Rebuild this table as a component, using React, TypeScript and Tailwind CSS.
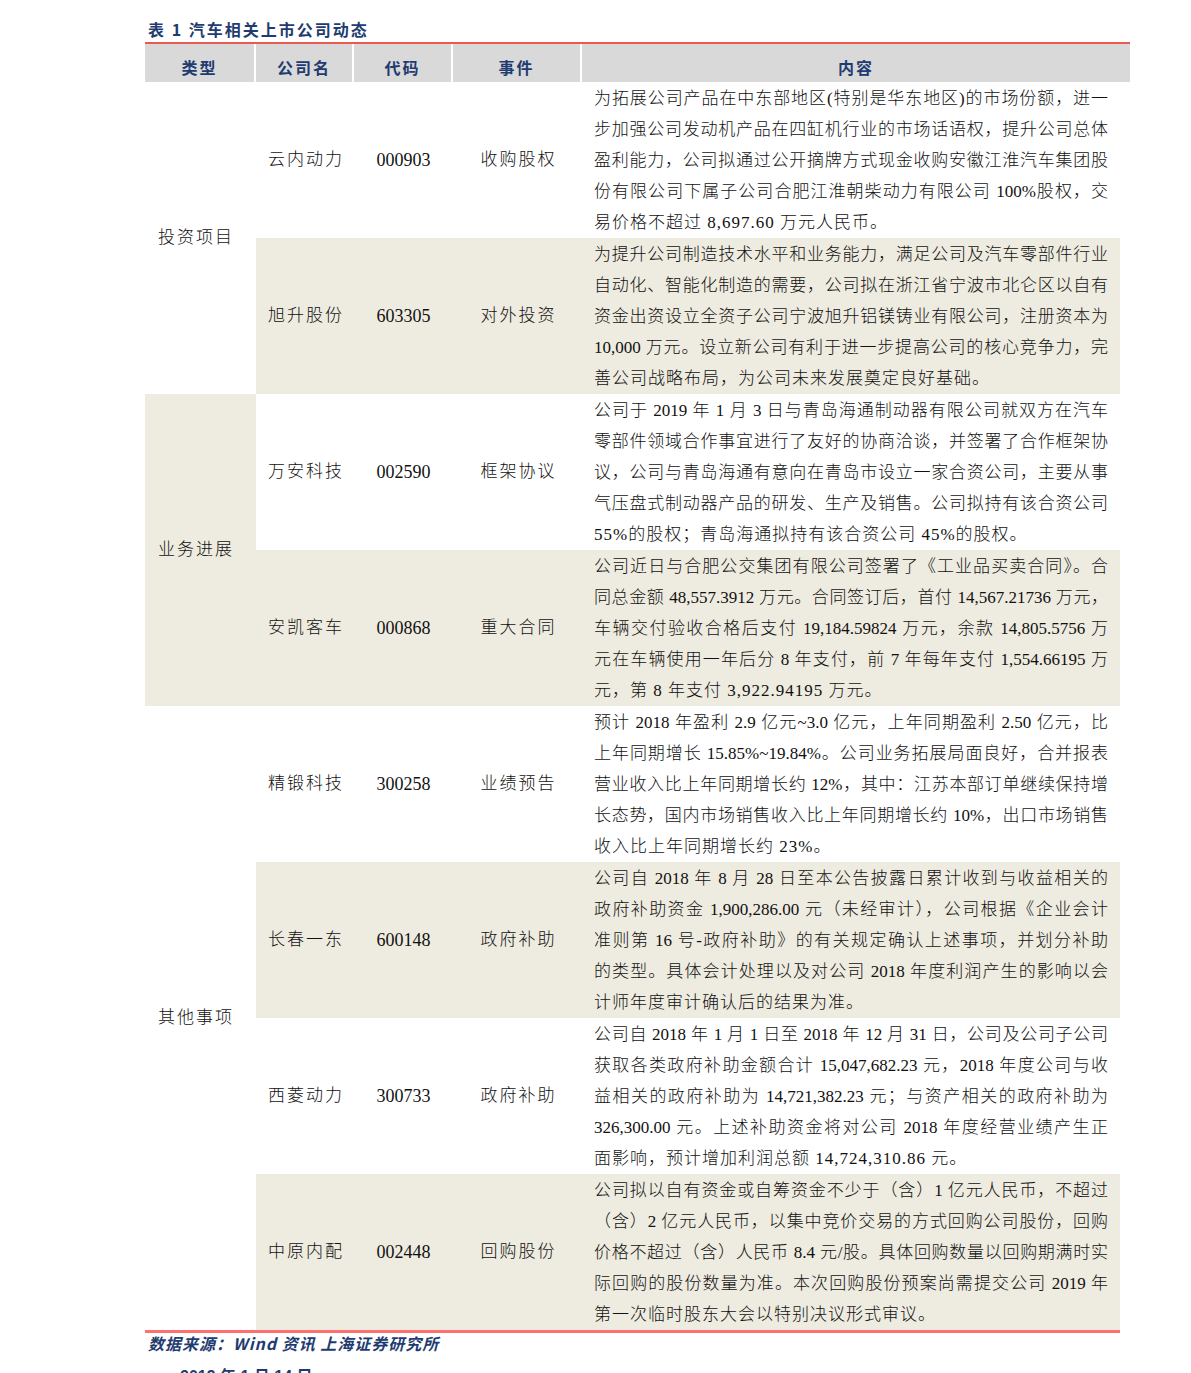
import React from 'react'

interface Row {
  name: string
  code: string
  event: string
  lines: string[]
  shaded: boolean
}

interface Group {
  label: string
  shaded: boolean
  rows: Row[]
}

const GROUPS: Group[] = [
  {
    label: '投资项目',
    shaded: false,
    rows: [
      {
        name: '云内动力',
        code: '000903',
        event: '收购股权',
        shaded: false,
        lines: [
          '为拓展公司产品在中东部地区(特别是华东地区)的市场份额，进一',
          '步加强公司发动机产品在四缸机行业的市场话语权，提升公司总体',
          '盈利能力，公司拟通过公开摘牌方式现金收购安徽江淮汽车集团股',
          '份有限公司下属子公司合肥江淮朝柴动力有限公司 100%股权，交',
          '易价格不超过 8,697.60 万元人民币。',
        ],
      },
      {
        name: '旭升股份',
        code: '603305',
        event: '对外投资',
        shaded: true,
        lines: [
          '为提升公司制造技术水平和业务能力，满足公司及汽车零部件行业',
          '自动化、智能化制造的需要，公司拟在浙江省宁波市北仑区以自有',
          '资金出资设立全资子公司宁波旭升铝镁铸业有限公司，注册资本为',
          '10,000 万元。设立新公司有利于进一步提高公司的核心竞争力，完',
          '善公司战略布局，为公司未来发展奠定良好基础。',
        ],
      },
    ],
  },
  {
    label: '业务进展',
    shaded: true,
    rows: [
      {
        name: '万安科技',
        code: '002590',
        event: '框架协议',
        shaded: false,
        lines: [
          '公司于 2019 年 1 月 3 日与青岛海通制动器有限公司就双方在汽车',
          '零部件领域合作事宜进行了友好的协商洽谈，并签署了合作框架协',
          '议，公司与青岛海通有意向在青岛市设立一家合资公司，主要从事',
          '气压盘式制动器产品的研发、生产及销售。公司拟持有该合资公司',
          '55%的股权；青岛海通拟持有该合资公司 45%的股权。',
        ],
      },
      {
        name: '安凯客车',
        code: '000868',
        event: '重大合同',
        shaded: true,
        lines: [
          '公司近日与合肥公交集团有限公司签署了《工业品买卖合同》。合',
          '同总金额 48,557.3912 万元。合同签订后，首付 14,567.21736 万元，',
          '车辆交付验收合格后支付 19,184.59824 万元，余款 14,805.5756 万',
          '元在车辆使用一年后分 8 年支付，前 7 年每年支付 1,554.66195 万',
          '元，第 8 年支付 3,922.94195 万元。',
        ],
      },
    ],
  },
  {
    label: '其他事项',
    shaded: false,
    rows: [
      {
        name: '精锻科技',
        code: '300258',
        event: '业绩预告',
        shaded: false,
        lines: [
          '预计 2018 年盈利 2.9 亿元~3.0 亿元，上年同期盈利 2.50 亿元，比',
          '上年同期增长 15.85%~19.84%。公司业务拓展局面良好，合并报表',
          '营业收入比上年同期增长约 12%，其中：江苏本部订单继续保持增',
          '长态势，国内市场销售收入比上年同期增长约 10%，出口市场销售',
          '收入比上年同期增长约 23%。',
        ],
      },
      {
        name: '长春一东',
        code: '600148',
        event: '政府补助',
        shaded: true,
        lines: [
          '公司自 2018 年 8 月 28 日至本公告披露日累计收到与收益相关的',
          '政府补助资金 1,900,286.00 元（未经审计），公司根据《企业会计',
          '准则第 16 号-政府补助》的有关规定确认上述事项，并划分补助',
          '的类型。具体会计处理以及对公司 2018 年度利润产生的影响以会',
          '计师年度审计确认后的结果为准。',
        ],
      },
      {
        name: '西菱动力',
        code: '300733',
        event: '政府补助',
        shaded: false,
        lines: [
          '公司自 2018 年 1 月 1 日至 2018 年 12 月 31 日，公司及公司子公司',
          '获取各类政府补助金额合计 15,047,682.23 元，2018 年度公司与收',
          '益相关的政府补助为 14,721,382.23 元；与资产相关的政府补助为',
          '326,300.00 元。上述补助资金将对公司 2018 年度经营业绩产生正',
          '面影响，预计增加利润总额 14,724,310.86 元。',
        ],
      },
      {
        name: '中原内配',
        code: '002448',
        event: '回购股份',
        shaded: true,
        lines: [
          '公司拟以自有资金或自筹资金不少于（含）1 亿元人民币，不超过',
          '（含）2 亿元人民币，以集中竞价交易的方式回购公司股份，回购',
          '价格不超过（含）人民币 8.4 元/股。具体回购数量以回购期满时实',
          '际回购的股份数量为准。本次回购股份预案尚需提交公司 2019 年',
          '第一次临时股东大会以特别决议形式审议。',
        ],
      },
    ],
  },
]

const bodyFont = "[font-family:'Liberation_Serif','Noto_Sans_CJK_SC',serif]"

const TableRow: React.FC<{ row: Row }> = ({ row }) => (
  <div className={`flex h-[156px] ${row.shaded ? 'bg-[#eeebe0]' : 'bg-white'}`}>
    <div className="w-[98px] flex items-center justify-center tracking-[2px] pl-[2px]">{row.name}</div>
    <div className="w-[99px] flex items-center justify-center text-[18px]">{row.code}</div>
    <div className="w-[129px] flex items-center justify-center tracking-[2px] pl-[2px]">{row.event}</div>
    <div className="w-[538px] flex flex-col justify-center pl-[12px] pr-[12px]">
      {row.lines.map((line, i) => (
        <div
          key={i}
          className={`leading-[31px] whitespace-nowrap ${
            i < row.lines.length - 1 ? 'text-justify [text-align-last:justify]' : 'tracking-[1px]'
          }`}
        >
          {line}
        </div>
      ))}
    </div>
  </div>
)

const App: React.FC = () => {
  return (
    <div className="min-h-[1373px] bg-white pl-[145px] pt-[17px] pb-10">
      <div className="w-[985px]">
        <div className="pl-[3px] leading-[24px] text-[16px] font-bold tracking-[2px] text-[#1f3c70] [font-family:'Noto_Sans_CJK_SC',sans-serif]">
          表 1 汽车相关上市公司动态
        </div>
        <div className="mt-[1px] h-[2px] bg-[#e85a52]" />
        <div className="flex h-[38px] bg-[#d9d9d9] text-[16px] font-bold tracking-[2px] text-[#1f3c70] [font-family:'Noto_Sans_CJK_SC',sans-serif]">
          <div className="w-[111px] border-r-2 border-white flex items-end justify-center pb-[3px]">类型</div>
          <div className="w-[98px] border-r-2 border-white flex items-end justify-center pb-[3px]">公司名</div>
          <div className="w-[99px] border-r-2 border-white flex items-end justify-center pb-[3px]">代码</div>
          <div className="w-[129px] border-r-2 border-white flex items-end justify-center pb-[3px]">事件</div>
          <div className="flex-1 flex items-end justify-center pb-[3px]">内容</div>
        </div>
      </div>

      <div className={`w-[975px] text-[17px] font-light text-[#111] ${bodyFont}`}>
        {GROUPS.map(group => (
          <div key={group.label} className="flex">
            <div
              className={`w-[111px] flex items-center pl-[13px] tracking-[2px] ${
                group.shaded ? 'bg-[#eeebe0]' : 'bg-white'
              }`}
            >
              {group.label}
            </div>
            <div className="flex flex-col">
              {group.rows.map(row => (
                <TableRow key={row.code} row={row} />
              ))}
            </div>
          </div>
        ))}
        <div className="h-[3px] bg-[#ff6f6f]" />
      </div>

      <div className="pl-[3px] leading-[20px] text-[16px] font-bold italic tracking-[1px] text-[#1f3c70] [font-family:'Noto_Sans_CJK_SC',sans-serif]">
        数据来源：Wind 资讯 上海证券研究所
      </div>
      <div className="pl-[35px] mt-[12px] leading-[24px] text-[16px] font-bold text-[#1f3c70] [font-family:'Liberation_Sans','Noto_Sans_CJK_SC',sans-serif]">
        2019 年 1 月 14 日
      </div>
    </div>
  )
}

export default App
